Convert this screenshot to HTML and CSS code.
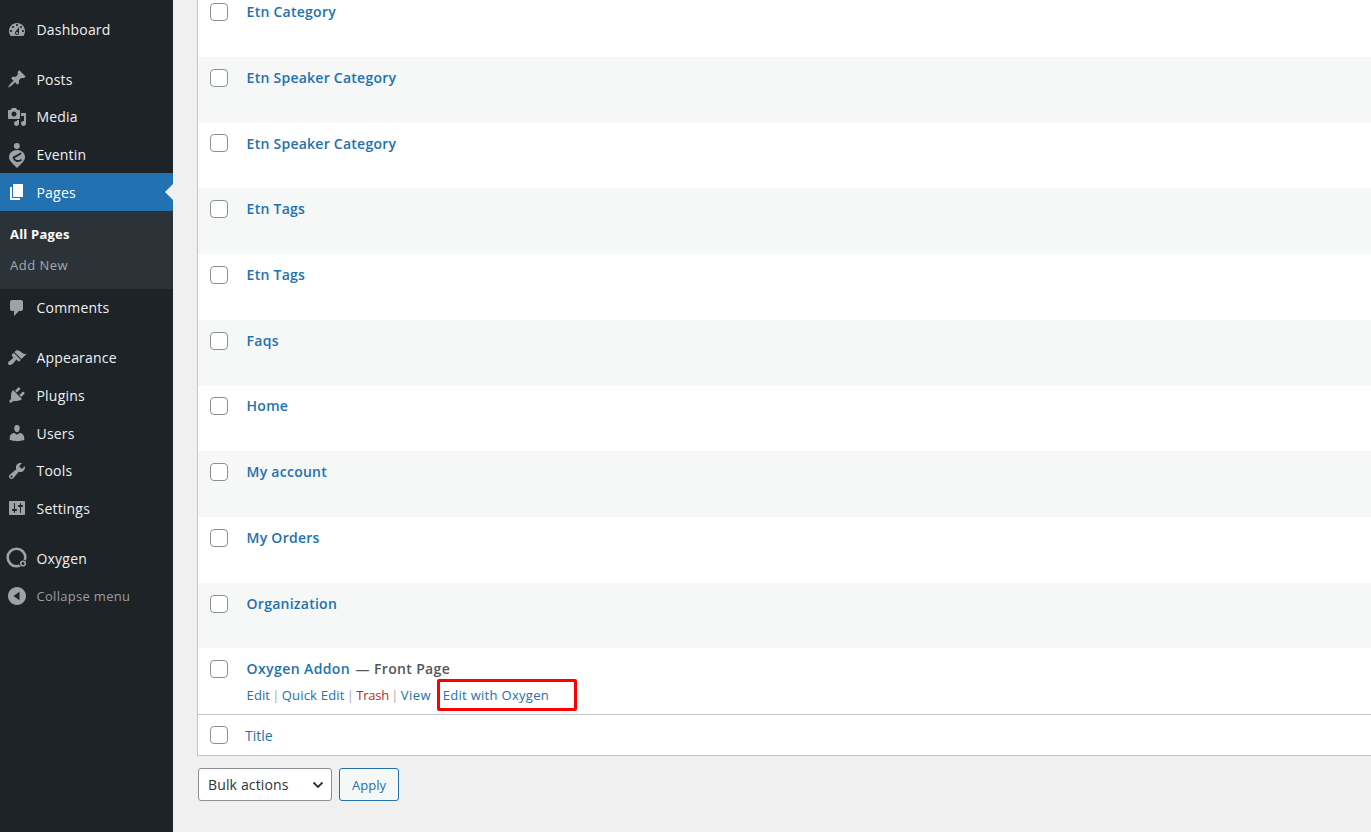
FILE: index.html
```html
<!DOCTYPE html>
<html lang="en">
<head>
<meta charset="utf-8">
<title>Pages</title>
<link rel="stylesheet" href="styles.css">
</head>
<body>
<div class="app">
<aside class="sidebar">
  <nav class="menu">
    <a class="item"><svg class="ico" viewBox="0 0 20 20"><path d="M3.76 16h12.48c1.1-1.37 1.76-3.11 1.76-5 0-4.42-3.58-8-8-8s-8 3.58-8 8c0 1.89.66 3.63 1.76 5zM10 4c.55 0 1 .45 1 1s-.45 1-1 1-1-.45-1-1 .45-1 1-1zM6 6c.55 0 1 .45 1 1s-.45 1-1 1-1-.45-1-1 .45-1 1-1zm8 0c.55 0 1 .45 1 1s-.45 1-1 1-1-.45-1-1 .45-1 1-1zm-5.37 5.55L12 7v6c0 1.1-.9 2-2 2s-2-.9-2-2c0-.57.24-1.08.63-1.45zM4 10c.55 0 1 .45 1 1s-.45 1-1 1-1-.45-1-1 .45-1 1-1zm12 0c.55 0 1 .45 1 1s-.45 1-1 1-1-.45-1-1 .45-1 1-1zm-5 3c0-.55-.45-1-1-1s-1 .45-1 1 .45 1 1 1 1-.45 1-1z"/></svg>Dashboard</a>
    <div class="sep"></div>
    <a class="item"><svg class="ico" viewBox="0 0 20 20"><path d="M10.44 3.02l1.82-1.82 6.36 6.35-1.83 1.82c-1.05-.68-2.48-.57-3.41.36l-.75.75c-.92.93-1.04 2.35-.35 3.41l-1.83 1.82-2.41-2.41-2.8 2.79c-.42.42-3.38 2.71-3.8 2.29s1.86-3.39 2.28-3.81l2.79-2.79L4.1 9.36l1.83-1.82c1.05.69 2.48.57 3.4-.36l.75-.75c.93-.92 1.05-2.35.36-3.41z"/></svg>Posts</a>
    <a class="item"><svg class="ico" viewBox="0 0 20 20"><path d="M13 11V4c0-.55-.45-1-1-1h-1.67L9 1H5L3.67 3H2c-.55 0-1 .45-1 1v7c0 .55.45 1 1 1h10c.55 0 1-.45 1-1zM7 4.5c1.38 0 2.5 1.12 2.5 2.5S8.38 9.5 7 9.5 4.5 8.38 4.5 7 5.62 4.5 7 4.5zM14 6h5v10.5c0 1.38-1.12 2.5-2.5 2.5S14 17.88 14 16.5s1.12-2.5 2.5-2.5c.17 0 .34.02.5.05V9h-3V6zm-4 8.05V13h2v3.5c0 1.38-1.12 2.5-2.5 2.5S7 17.88 7 16.5 8.12 14 9.5 14c.17 0 .34.02.5.05z"/></svg>Media</a>
    <a class="item"><svg class="ico ico-ev" viewBox="0 0 20 26"><circle cx="9.800" cy="4" r="3"/><path d="M10 8c4.500 0 8 3 8 7 0 3-2 5-8 11-6-6-8-8-8-11 0-4 3.500-7 8-7z"/><path class="cut" d="M14.200 11.300L6.600 15.600c.5 3.200 4.600 4.700 7.900 2"/></svg>Eventin</a>
    <a class="item current"><svg class="ico" viewBox="0 0 20 20"><path d="M6 15V2h10v13H6zm-1 1h8v2H3V5h2v11z"/></svg>Pages</a>
    <div class="submenu">
      <a class="subitem active">All Pages</a>
      <a class="subitem">Add New</a>
    </div>
    <a class="item"><svg class="ico" viewBox="0 0 20 20"><path d="M5 2h9c1.100 0 2 .9 2 2v7c0 1.100-.9 2-2 2h-2l-5 5v-5H5c-1.100 0-2-.9-2-2V4c0-1.100.9-2 2-2z"/></svg>Comments</a>
    <div class="sep sep-wide"></div>
    <a class="item"><svg class="ico" viewBox="0 0 20 20"><path d="M14.480 11.060L7.410 3.990l1.500-1.500c.5-.56 2.300-.47 3.510.32 1.210.8 1.430 1.280 2.910 2.100 1.180.64 2.450 1.260 4.450.85zm-.71.71L6.700 4.700 4.930 6.470c-.39.39-.39 1.020 0 1.410l1.060 1.060c.39.39.39 1.030 0 1.420-.6.6-1.430 1.110-2.210 1.690-.35.26-.7.53-1.010.84C1.430 13.230.76 14.560 1.100 15.800c.08.29.23.56.45.78.22.22.49.37.78.45 1.240.34 2.570-.33 3.910-1.670.31-.31.58-.66.84-1.010.58-.78 1.090-1.610 1.690-2.210.39-.39 1.030-.39 1.420 0l1.060 1.060c.39.39 1.020.39 1.410 0z"/></svg>Appearance</a>
    <a class="item"><svg class="ico" viewBox="0 0 20 20"><path d="M13.110 4.360L9.870 7.600 8 5.730l3.240-3.240c.35-.34 1.050-.2 1.560.32.52.51.66 1.210.31 1.550zm-8 1.770l.91-1.120 9.010 9.010-1.190.84c-.71.71-2.630 1.160-3.820 1.160H6.140L4.900 17.260c-.59.59-1.540.59-2.120 0-.59-.58-.59-1.530 0-2.120l1.240-1.240v-3.880c0-1.130.4-3.190 1.090-3.890zm7.260 3.970l3.240-3.240c.34-.35 1.040-.21 1.550.31.52.51.66 1.210.31 1.550l-3.240 3.250z"/></svg>Plugins</a>
    <a class="item"><svg class="ico" viewBox="0 0 20 20"><path d="M10 9.250c-2.270 0-2.730-3.440-2.730-3.440C7 4.020 7.820 2 9.970 2c2.160 0 2.980 2.020 2.710 3.810 0 0-.41 3.440-2.680 3.440zm0 2.570L12.720 10c2.390 0 4.520 2.330 4.520 4.530v2.490s-3.650 1.130-7.240 1.130c-3.650 0-7.240-1.130-7.240-1.130v-2.490c0-2.250 1.940-4.480 4.470-4.480z"/></svg>Users</a>
    <a class="item"><svg class="ico" viewBox="0 0 20 20"><path d="M16.680 9.770c-1.340 1.340-3.300 1.670-4.950.99l-5.410 6.520c-.99.99-2.590.99-3.580 0s-.99-2.590 0-3.570l6.520-5.420c-.68-1.650-.35-3.610.99-4.950 1.280-1.280 3.120-1.620 4.720-1.060l-2.890 2.890 2.820 2.820 2.860-2.870c.53 1.580.18 3.390-1.080 4.650zM3.810 16.210c.4.39 1.040.39 1.430 0 .4-.4.4-1.040 0-1.430-.39-.4-1.030-.4-1.430 0-.39.39-.39 1.030 0 1.430z"/></svg>Tools</a>
    <a class="item"><svg class="ico" viewBox="0 0 20 20"><path d="M18 16V4c0-.55-.45-1-1-1H3c-.55 0-1 .45-1 1v12c0 .55.45 1 1 1h14c.55 0 1-.45 1-1zM8 11h1c.55 0 1 .45 1 1s-.45 1-1 1H8v1.500c0 .28-.22.5-.5.5s-.5-.22-.5-.5V13H6c-.55 0-1-.45-1-1s.45-1 1-1h1V5.500c0-.28.22-.5.5-.5s.5.22.5.5V11zm5-2h-1c-.55 0-1-.45-1-1s.45-1 1-1h1V5.500c0-.28.22-.5.5-.5s.5.22.5.5V7h1c.55 0 1 .45 1 1s-.45 1-1 1h-1v5.500c0 .28-.22.5-.5.5s-.5-.22-.5-.5V9z"/></svg>Settings</a>
    <div class="sep sep-mid"></div>
    <a class="item"><svg class="ico ico-ox" viewBox="0 0 22 22"><circle cx="10.500" cy="10.500" r="8.800" fill="none" stroke-width="2.600" class="ring"/><circle cx="17" cy="16.500" r="3.800" class="knock"/><circle cx="17" cy="16.500" r="2.300" fill="none" stroke-width="1.600" class="ring"/></svg>Oxygen</a>
    <a class="item collapse"><svg class="ico" viewBox="0 0 20 20"><path fill-rule="evenodd" d="M19 10c0-4.970-4.030-9-9-9s-9 4.030-9 9 4.030 9 9 9 9-4.030 9-9zm-6.500 4.200L6.500 10l6-4.200v8.400z"/></svg>Collapse menu</a>
  </nav>
</aside>
<main class="content">
  <section class="table">
    <div class="row"><span class="check"></span><div class="cell"><a class="title">Etn Category</a></div></div>
    <div class="row alt"><span class="check"></span><div class="cell"><a class="title">Etn Speaker Category</a></div></div>
    <div class="row"><span class="check"></span><div class="cell"><a class="title">Etn Speaker Category</a></div></div>
    <div class="row alt"><span class="check"></span><div class="cell"><a class="title">Etn Tags</a></div></div>
    <div class="row"><span class="check"></span><div class="cell"><a class="title">Etn Tags</a></div></div>
    <div class="row alt"><span class="check"></span><div class="cell"><a class="title">Faqs</a></div></div>
    <div class="row"><span class="check"></span><div class="cell"><a class="title">Home</a></div></div>
    <div class="row alt"><span class="check"></span><div class="cell"><a class="title">My account</a></div></div>
    <div class="row"><span class="check"></span><div class="cell"><a class="title">My Orders</a></div></div>
    <div class="row alt"><span class="check"></span><div class="cell"><a class="title">Organization</a></div></div>
    <div class="row"><span class="check"></span><div class="cell">
      <div class="head-line"><a class="title">Oxygen Addon</a><span class="state">— Front Page</span></div>
      <div class="actions"><a>Edit</a><i>|</i><a class="quick">Quick Edit</a><i>|</i><a class="trash">Trash</a><i>|</i><a class="view">View</a><span class="marked"><a>Edit with Oxygen</a></span></div>
    </div></div>
    <div class="foot"><span class="check"></span><a class="foot-title">Title</a></div>
  </section>
  <div class="bulk">
    <div class="select">Bulk actions<svg class="chev" viewBox="0 0 12 8"><path d="M1.500 1.500L6 6l4.500-4.500" fill="none" stroke="#2c3338" stroke-width="1.800"/></svg></div>
    <button class="apply">Apply</button>
  </div>
</main>
</div>
</body>
</html>
```
FILE: styles.css
```css
* { box-sizing: border-box; }
html, body { margin: 0; height: 100%; overflow: hidden; }
body {
  background: #f0f0f1;
  color: #3c434a;
  font-family: "Open Sans", "Noto Sans", sans-serif;
  font-size: 13.5px;
}
a { color: #2271b1; text-decoration: none; }
.app { display: flex; height: 832px; }

.sidebar { flex: 0 0 173px; background: #1d2327; padding-top: 11px; }
.menu { display: flex; flex-direction: column; }
.item {
  display: flex;
  align-items: center;
  height: 37.6px;
  padding-left: 7px;
  color: #f0f0f1;
  font-size: 14px;
  letter-spacing: 0.2px;
  position: relative;
}
.ico { width: 20px; height: 20px; margin-right: 9.500px; fill: #9ca2a7; flex: none; }
.ico-ev { height: 26px; margin-top: -3px; margin-bottom: -3px; }
.cut { fill: none; stroke: #1d2327; stroke-width: 1.800; }
.ico-ox { width: 22px; height: 22px; margin: 0 8.500px 0 -1px; }
.ring { stroke: #9ca2a7; }
.knock { fill: #1d2327; }
.sep { height: 12px; }
.sep-wide { height: 12.500px; }
.sep-mid { height: 12.300px; }
.current { background: #2271b1; color: #fff; }
.current .ico { fill: #fff; }
.current::after {
  content: "";
  position: absolute;
  right: 0;
  top: 50%;
  margin-top: -8px;
  border: 8px solid transparent;
  border-right-color: #f0f0f1;
  border-left-width: 0;
}
.submenu { background: #2c3338; height: 78px; padding-top: 7.500px; display: flex; flex-direction: column; }
.subitem { height: 31px; display: flex; align-items: center; padding-left: 10px; color: #a5a8ab; font-size: 13px; letter-spacing: 0.5px; }
.subitem.active { color: #fff; font-weight: 700; letter-spacing: 0.2px; }
.collapse { color: #9a9ea2; font-size: 13px; letter-spacing: 0.3px; }

.content { flex: 1; min-width: 0; padding-left: 24px; }
.table {
  width: 1300px;
  margin-top: -8.880px;
  background: #fff;
  border: 1px solid #c3c4c7;
  border-width: 0 0 1px 1px;
}
.row { height: 65.740px; display: flex; padding: 11.800px 0 0 12px; }
.alt { background: #f6f7f7; }
.check {
  flex: none;
  width: 18px;
  height: 18px;
  background: #fff;
  border: 1px solid #8c8f94;
  border-radius: 4px;
}
.cell { padding: 0.120px 0 0 18.600px; line-height: 18px; }
.title { font-weight: 600; font-size: 14px; color: #2271b1; letter-spacing: 0.25px; }
.head-line .title { letter-spacing: 0.4px; }
.state { margin-left: 5.500px; font-weight: 600; font-size: 14px; color: #50575e; letter-spacing: 0.35px; }
.actions { display: flex; align-items: center; margin-top: 1px; font-size: 13px; height: 32px; white-space: nowrap; letter-spacing: 0.1px; }
.actions i { font-style: normal; color: #a7aaad; margin: 0 2.200px; }
.quick { letter-spacing: 0.2px; }
.trash { color: #b32d2e; letter-spacing: -0.2px; }
.view { letter-spacing: 0.5px; }
.marked {
  display: flex;
  align-items: center;
  width: 140px;
  height: 32px;
  margin-left: 5.500px;
  padding-left: 3px;
  border: 3px solid #f00;
  border-radius: 2px;
  letter-spacing: 0.3px;
}
.foot { height: 41px; border-top: 1px solid #c3c4c7; display: flex; align-items: center; padding-left: 12px; }
.foot-title { margin-left: 17px; font-size: 14px; }

.bulk { display: flex; gap: 7px; margin: 12px 0 0 1px; }
.select {
  width: 134px;
  height: 33px;
  display: flex;
  align-items: center;
  justify-content: space-between;
  padding: 0 7px 0 9px;
  background: #fff;
  border: 1px solid #8c8f94;
  border-radius: 3px;
  color: #2c3338;
  font-size: 14px;
  letter-spacing: 0.15px;
}
.chev { width: 12px; height: 8px; }
.apply {
  width: 60px;
  height: 33px;
  background: #f6f7f7;
  border: 1px solid #2271b1;
  border-radius: 3px;
  color: #2271b1;
  font: inherit;
  font-size: 13px;
  padding: 0;
}
```
